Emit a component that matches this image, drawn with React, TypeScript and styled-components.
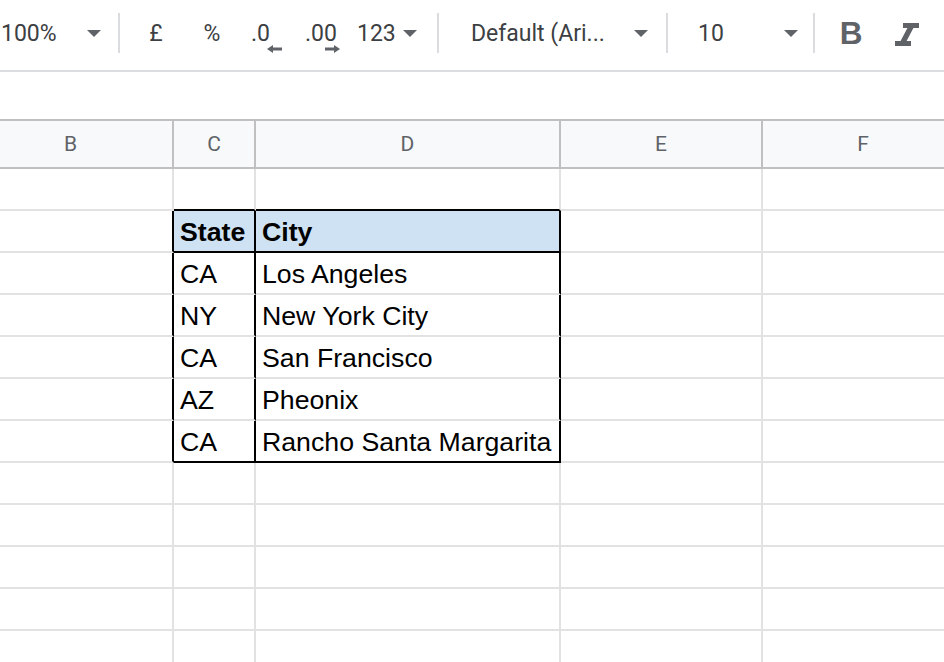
import React from "react";
import styled, { createGlobalStyle } from "styled-components";

const GlobalStyle = createGlobalStyle`
  html, body {
    margin: 0;
    padding: 0;
    background: #ffffff;
    overflow: hidden;
  }
  body {
    font-family: Roboto, "Liberation Sans", Arial, sans-serif;
  }
`;

const GRID_LINE = "#e2e2e2";
const HEADER_LINE = "#c0c0c0";
const INK = "#000000";

const columns = [
  { label: "B", width: 205 },
  { label: "C", width: 82 },
  { label: "D", width: 305 },
  { label: "E", width: 202 },
  { label: "F", width: 202 },
];

const table = [
  ["State", "City"],
  ["CA", "Los Angeles"],
  ["NY", "New York City"],
  ["CA", "San Francisco"],
  ["AZ", "Pheonix"],
  ["CA", "Rancho Santa Margarita"],
];

const ROW_COUNT = 12;

/* toolbar */

const Page = styled.div`
  width: 944px;
  height: 662px;
  overflow: hidden;
  display: flex;
  flex-direction: column;
`;

const Toolbar = styled.div`
  flex: none;
  height: 72px;
  box-sizing: border-box;
  border-bottom: 2px solid #dadce0;
  padding-bottom: 4px;
  display: flex;
  align-items: center;
  color: #3c4043;
  font-family: Roboto, "Liberation Sans", sans-serif;
  font-size: 23px;
  white-space: nowrap;
`;

const Separator = styled.div<{ $first?: boolean }>`
  flex: none;
  width: 2px;
  height: 40px;
  background: #dadce0;
  margin: 0 8px 0 ${(p) => (p.$first ? 0 : 8)}px;
`;

const Select = styled.div<{ $width: number; $padLeft: number; $padRight: number }>`
  flex: none;
  box-sizing: border-box;
  width: ${(p) => p.$width}px;
  height: 100%;
  padding: 0 ${(p) => p.$padRight}px 0 ${(p) => p.$padLeft}px;
  display: flex;
  align-items: center;
  justify-content: space-between;
`;

const Label = styled.span`
  line-height: 1;
  position: relative;
`;

const Caret = styled.span<{ $gap?: number }>`
  flex: none;
  width: 0;
  height: 0;
  margin-left: ${(p) => p.$gap ?? 0}px;
  border-left: 7px solid transparent;
  border-right: 7px solid transparent;
  border-top: 7px solid #5f6368;
`;

const ToolButton = styled.div<{ $width?: number }>`
  flex: none;
  width: ${(p) => p.$width ?? 56}px;
  height: 100%;
  display: flex;
  align-items: center;
  justify-content: center;
`;

const NumberFormat = styled.div`
  flex: none;
  box-sizing: border-box;
  width: 77px;
  height: 100%;
  padding-left: 5px;
  display: flex;
  align-items: center;
`;

const DecimalIcon = styled.span<{ $width: number }>`
  position: relative;
  display: inline-block;
  width: ${(p) => p.$width}px;
  line-height: 1;
`;

const DecimalArrow = styled.svg<{ $left: number }>`
  position: absolute;
  left: ${(p) => p.$left}px;
  top: 23px;
  width: 15px;
  height: 8px;
  fill: #5f6368;
`;

const BoldGlyph = styled.span`
  font-family: "Liberation Sans", Arial, sans-serif;
  font-weight: 700;
  font-size: 31.5px;
  line-height: 1;
  color: #5f6368;
  padding-top: 2px;
`;

const ItalicSvg = styled.svg`
  width: 24px;
  height: 23px;
  fill: #5f6368;
  margin-top: 2px;
`;

/* sheet */

const Spacer = styled.div`
  flex: none;
  height: 47px;
`;

const Grid = styled.div`
  display: grid;
  grid-template-columns: ${columns.map((c) => `${c.width}px`).join(" ")};
  width: max-content;
  margin-left: -31px;
`;

const ColumnHeader = styled.div`
  box-sizing: border-box;
  height: 50px;
  background: #f8f9fa;
  border-top: 2px solid ${HEADER_LINE};
  border-bottom: 2px solid ${HEADER_LINE};
  border-right: 2px solid ${HEADER_LINE};
  display: flex;
  align-items: center;
  justify-content: center;
  font-family: Roboto, "Liberation Sans", sans-serif;
  font-size: 21px;
  color: #5f6368;
`;

const Cell = styled.div<{ $right: string; $bottom: string; $fill?: string; $bold?: boolean }>`
  box-sizing: border-box;
  height: 42px;
  padding: 2px 0 0 6px;
  background: ${(p) => p.$fill ?? "#ffffff"};
  border-right: 2px solid ${(p) => p.$right};
  border-bottom: 2px solid ${(p) => p.$bottom};
  display: flex;
  align-items: center;
  overflow: hidden;
  white-space: nowrap;
  font-family: "Liberation Sans", Arial, sans-serif;
  font-size: 26.7px;
  font-weight: ${(p) => (p.$bold ? 700 : 400)};
  color: #000000;
`;

function ArrowLeft() {
  return <path d="M0 4 L6 0 V2.6 H15 V5.4 H6 V8 Z" />;
}

function ArrowRight() {
  return <path d="M15 4 L9 0 V2.6 H0 V5.4 H9 V8 Z" />;
}

function FormatToolbar() {
  return (
    <Toolbar>
      <Select $width={118} $padLeft={1} $padRight={17}>
        <Label>100%</Label>
        <Caret />
      </Select>
      <Separator $first />
      <ToolButton>£</ToolButton>
      <ToolButton>%</ToolButton>
      <ToolButton>
        <DecimalIcon $width={34}>
          .0
          <DecimalArrow $left={16} viewBox="0 0 15 8">
            <ArrowLeft />
          </DecimalArrow>
        </DecimalIcon>
      </ToolButton>
      <ToolButton>
        <DecimalIcon $width={38}>
          .00
          <DecimalArrow $left={20} viewBox="0 0 15 8">
            <ArrowRight />
          </DecimalArrow>
        </DecimalIcon>
      </ToolButton>
      <NumberFormat>
        <Label>123</Label>
        <Caret $gap={7} />
      </NumberFormat>
      <Separator />
      <Select $width={211} $padLeft={24} $padRight={10}>
        <Label>Default (Ari...</Label>
        <Caret />
      </Select>
      <Separator />
      <Select $width={129} $padLeft={22} $padRight={7}>
        <Label>10</Label>
        <Caret />
      </Select>
      <Separator />
      <ToolButton>
        <BoldGlyph>B</BoldGlyph>
      </ToolButton>
      <ToolButton>
        <ItalicSvg viewBox="6 4 12 14" preserveAspectRatio="none">
          <path d="M10 4v3h2.21l-3.42 8H6v3h8v-3h-2.21l3.42-8H18V4z" />
        </ItalicSvg>
      </ToolButton>
    </Toolbar>
  );
}

function SheetGrid() {
  const rows = Array.from({ length: ROW_COUNT }, (_, r) => r);
  return (
    <Grid>
      {columns.map((c) => (
        <ColumnHeader key={c.label}>{c.label}</ColumnHeader>
      ))}
      {rows.map((r) => {
        const tableRow = r >= 1 && r <= table.length ? table[r - 1] : null;
        const isHead = r === 1;
        return columns.map((c, ci) => {
          const inTableCol = ci === 1 || ci === 2;
          let right = GRID_LINE;
          let bottom = GRID_LINE;
          if (tableRow && ci <= 2) right = INK;
          if (inTableCol && (r === 0 || r === 1 || r === table.length)) bottom = INK;
          const text = tableRow && inTableCol ? tableRow[ci - 1] : "";
          return (
            <Cell
              key={`${r}-${c.label}`}
              $right={right}
              $bottom={bottom}
              $fill={isHead && inTableCol ? "#cfe2f3" : undefined}
              $bold={isHead}
            >
              {text}
            </Cell>
          );
        });
      })}
    </Grid>
  );
}

export default function App() {
  return (
    <>
      <GlobalStyle />
      <Page>
        <FormatToolbar />
        <Spacer />
        <SheetGrid />
      </Page>
    </>
  );
}
